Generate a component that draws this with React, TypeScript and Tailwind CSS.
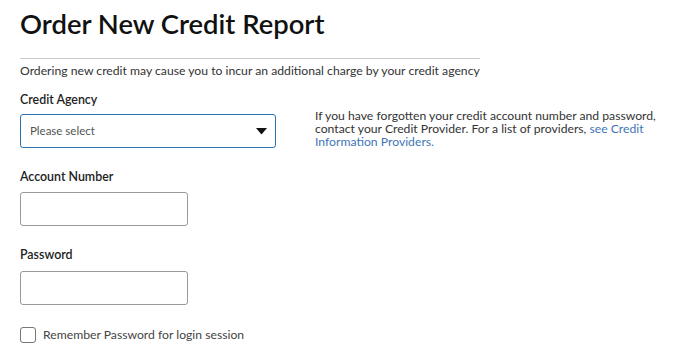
import React from "react";

export default function App() {
  return (
    <div className="w-[681px] h-[360px] bg-white overflow-hidden px-5 text-[#222]" style={{ fontFamily: "Lato, 'Noto Sans', sans-serif" }}>
      <h1 className="text-[27.4px] leading-[34px] font-semibold text-[#111] pt-[7px]">Order New Credit Report</h1>
      <div className="w-[460px] h-px bg-[#cccccc] mt-[17px]" />
      <p className="text-[12.2px] leading-[16px] text-[#333] mt-[4px]">
        Ordering new credit may cause you to incur an additional charge by your credit agency
      </p>
      <div className="flex mt-[13px]">
        <div className="w-[256px]">
          <div className="text-[12.4px] leading-[16px] font-semibold text-[#222]">Credit Agency</div>
          <div className="mt-[6px] h-[34px] w-[256px] border border-[#2a72b0] rounded-[3px] flex items-center justify-between pl-[9px] pr-[8px]">
            <span className="text-[11.5px] text-[#555]">Please select</span>
            <svg width="11" height="7" viewBox="0 0 11 7"><path d="M0 0 L11 0 L5.5 6.5 Z" fill="#111" /></svg>
          </div>
        </div>
        <div className="ml-[39px] mt-[17px] w-[350px] text-[12.2px] leading-[13px] text-[#333]">
          If you have forgotten your credit account number and password, contact your Credit Provider. For a list of providers,{" "}
          <span className="text-[#3f76b7]">see Credit Information Providers.</span>
        </div>
      </div>
      <div className="text-[12.4px] leading-[16px] font-semibold text-[#222] mt-[21px]">Account Number</div>
      <div className="mt-[7px] h-[34px] w-[168px] border border-[#999] rounded-[3px]" />
      <div className="text-[12.4px] leading-[16px] font-semibold text-[#222] mt-[21px]">Password</div>
      <div className="mt-[8px] h-[34px] w-[168px] border border-[#999] rounded-[3px]" />
      <div className="flex items-center mt-[22px]">
        <div className="w-[16px] h-[16px] border border-[#777] rounded-[3px]" />
        <span className="ml-[7px] text-[12.2px] leading-[16px] text-[#444]">Remember Password for login session</span>
      </div>
    </div>
  );
}
